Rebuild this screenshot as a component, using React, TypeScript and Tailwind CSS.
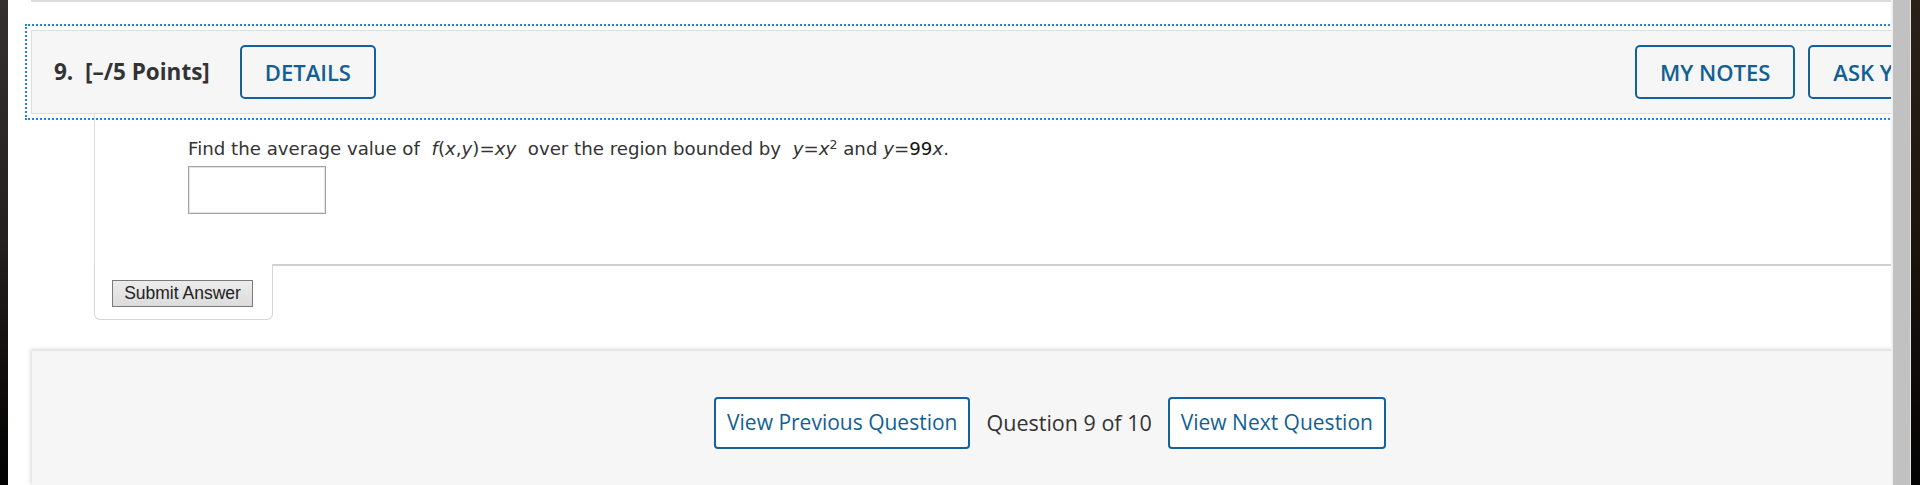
import React from 'react';

const blue = 'text-[#125f94] border-[#12639b]';

function HeaderButton({ label }: { label: string }) {
  return (
    <button
      className={`h-[54px] shrink-0 rounded-[5px] border-2 px-[23px] text-[22px] font-semibold whitespace-nowrap ${blue}`}
    >
      {label}
    </button>
  );
}

function NavButton({ label }: { label: string }) {
  return (
    <button
      className={`h-[52px] rounded-[4px] border-2 bg-white px-[11px] text-[21px] whitespace-nowrap ${blue}`}
    >
      {label}
    </button>
  );
}

export default function App() {
  return (
    <div className="flex h-[485px] w-[1920px] overflow-hidden bg-white font-['Open_Sans',sans-serif]">
      {/* left edge of desktop */}
      <div className="w-[8px] shrink-0 bg-gradient-to-b from-[#34302b] via-[#24201c] to-[#030303]" />

      {/* page */}
      <div className="flex w-[1883px] shrink-0 flex-col overflow-hidden">
        {/* previous question box bottom */}
        <div className="ml-[23px] h-[2px] border-b-2 border-l border-[#dddddd]" />

        {/* question header */}
        <div className="mt-[28px] ml-[23px] flex h-[84px] w-[2200px] shrink-0 items-center border border-[#dddddd] bg-[#f6f6f6] pl-[22px] outline-2 outline-offset-4 outline-dotted outline-[#1f86e0]">
          <div className="flex w-[1581px] shrink-0 items-center gap-[30px]">
            <span className="text-[22.5px] font-bold whitespace-pre text-[#333333]">
              9.  [–/5 Points]
            </span>
            <HeaderButton label="DETAILS" />
          </div>
          <div className="flex items-center gap-[13px]">
            <HeaderButton label="MY NOTES" />
            <HeaderButton label="ASK YOUR TEACHER" />
          </div>
        </div>

        {/* question body */}
        <div className="ml-[86px] flex flex-col">
          <div className="border-l border-[#dddddd] pt-[23px] pb-[50px] pl-[93px] text-[18.2px] leading-[23px] text-[#333333]">
            <p className="font-['DejaVu_Sans',Verdana,sans-serif] whitespace-pre">
              Find the average value of  <i>f</i>(<i>x</i>,<i>y</i>)=<i>xy</i>  over the region bounded by  <i>y</i>=<i>x</i>
              <sup className="text-[12.5px] leading-none">2</sup> and <i>y</i>=<span className="text-[#111111]">99</span><i>x</i>.
            </p>
            <input
              type="text"
              className="mt-[6px] h-[48px] w-[138px] border border-[#a3a3a3] bg-white shadow-[inset_0_0_0_1px_#e4e4e4]"
            />
          </div>
          <div className="flex">
            <div className="w-[179px] shrink-0 rounded-b-[6px] border-r border-b border-l border-[#d6d6d6] pt-[16px] pb-[12px] pl-[17px]">
              <button className="h-[27px] w-[141px] border border-[#7a7a7a] bg-gradient-to-b from-[#ececec] to-[#dcdcdc] font-['Liberation_Sans',Arial,sans-serif] text-[17.5px] leading-none text-[#222222]">
                Submit Answer
              </button>
            </div>
            <div className="flex-1 border-t-2 border-[#d0d0d0]" />
          </div>
        </div>

        {/* navigation bar */}
        <div className="mt-[29px] ml-[24px] flex w-[2036px] flex-1 shrink-0 justify-center border-t-2 border-[#e6e6e6] bg-[#f6f6f6] pt-[46px] shadow-[-2px_0_4px_rgba(0,0,0,0.12)]">
          <div className="flex h-[52px] items-center gap-[14px]">
            <NavButton label="View Previous Question" />
            <span className="mx-[2px] text-[21.5px] text-[#333333]">Question 9 of 10</span>
            <NavButton label="View Next Question" />
          </div>
        </div>
      </div>

      {/* scrollbar */}
      <div className="w-[2px] shrink-0 bg-[#f0f0f0]" />
      <div className="w-[17px] shrink-0 bg-[#c1c1c1]" />
      <div className="w-px shrink-0 bg-[#e2e2e2]" />
      <div className="flex-1 bg-gradient-to-b from-[#2b2119] via-[#1c150f] to-[#040404]" />
    </div>
  );
}
